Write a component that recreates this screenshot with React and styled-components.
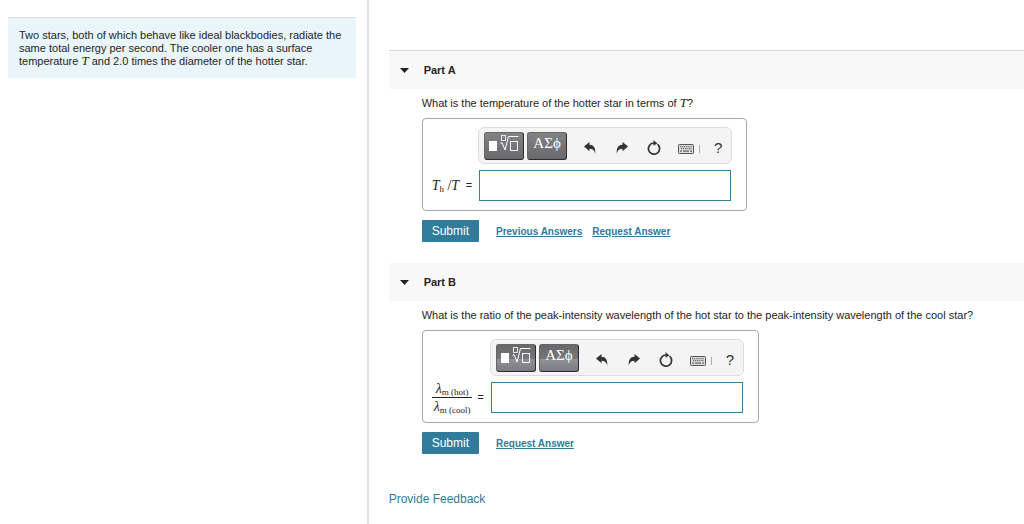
import React, { useState } from "react";
import styled, { createGlobalStyle } from "styled-components";

const GlobalStyle = createGlobalStyle`
  * {
    box-sizing: border-box;
  }
  body {
    margin: 0;
    background: #fff;
    color: #252525;
    font-family: "Liberation Sans", Arial, sans-serif;
    font-size: 11px;
    line-height: 13px;
  }
  p, h2 {
    margin: 0;
  }
`;
const Page = styled.div`
  display: flex;
  min-height: 100vh;
`;
const Sidebar = styled.aside`
  flex: 0 0 36%;
  padding: 17px 11px 0 8px;
  border-right: 2px solid #d8e0e8;
`;
const Intro = styled.p`
  padding: 11px 11px 10px;
  background: #e9f5f8;
  border-top: 1px solid #dadfdf;
`;
const Main = styled.main`
  flex: 1;
  min-width: 0;
  padding: 50px 0 0 20px;
`;
const Part = styled.section`
  margin-bottom: 21px;
`;
const PartHeader = styled.h2`
  background: #f8f8f8;
  border-top: ${(props) => (props.$first ? "1px solid #d5d5d5" : "0")};
  font-size: 11px;
`;
const Toggle = styled.button`
  display: flex;
  align-items: center;
  gap: 15px;
  width: 100%;
  padding: 13px 11px 12px;
  border: 0;
  background: none;
  color: inherit;
  font: inherit;
  line-height: 13px;
  text-align: left;
  cursor: pointer;
`;
const Caret = styled.svg`
  width: 9px;
  height: 5px;
  fill: #222;
  transform: ${(props) => (props.$open ? "none" : "rotate(-90deg)")};
`;
const PartBody = styled.form`
  padding: 8px 10px 0 33px;
`;
const AnswerBox = styled.div`
  display: flex;
  align-items: flex-end;
  gap: 6px;
  width: fit-content;
  margin: 8px 0 9px;
  padding: 8px 14px 9px 9px;
  border: 1px solid #a8a8a8;
  border-radius: 4px;
`;
const AnswerLabel = styled.label`
  display: flex;
  align-items: center;
  gap: 5px;
  height: 31px;
`;
const Formula = styled.span`
  min-width: 29px;
  font-family: "Liberation Serif", "Times New Roman", serif;
  font-size: 14px;
  white-space: nowrap;
`;
const Variable = styled.i`
  font-family: "Liberation Serif", "Times New Roman", serif;
  font-size: 13px;
  line-height: 0;
`;
const Sub = styled.sub`
  font-size: 9px;
  line-height: 0;
  vertical-align: -2px;
`;
const Fraction = styled.span`
  display: flex;
  flex-direction: column;
  text-align: center;
`;
const Term = styled.span`
  padding: 0 2px;
  line-height: 17px;
  & + & {
    border-top: 1px solid #252525;
  }
`;
const Fields = styled.div`
  width: 254px;
`;
const Toolbar = styled.div`
  display: flex;
  align-items: center;
  height: 37px;
  margin-bottom: 6px;
  padding-left: 5px;
  background: #f4f4f4;
  border: 1px solid #dedede;
  border-radius: 6px;
`;
const Tools = styled.div`
  display: flex;
  flex: 1;
  margin-left: 4px;
`;
const PaletteButton = styled.button`
  display: flex;
  flex: none;
  justify-content: center;
  width: 40px;
  height: 28px;
  margin-right: 3px;
  padding: 0;
  border: 1px solid #2c2c2e;
  border-top-color: #666;
  border-left-color: #666;
  border-radius: 3px;
  background: ${(props) =>
    props.$split
      ? "linear-gradient(#68686a, #77777a 52%, #919198 53%, #7b7b82)"
      : "linear-gradient(#838386, #69696d)"};
  color: #fff;
  font-family: "Liberation Serif", "Times New Roman", serif;
  font-size: 15px;
  line-height: 20px;
`;
const ToolButton = styled.button`
  display: flex;
  flex: 0 0 32px;
  justify-content: center;
  padding: 4px 0 0;
  border: 0;
  background: none;
  color: #333;
  font-family: "Liberation Sans", Arial, sans-serif;
  font-size: 15px;
  line-height: 16px;
`;
const ToolIcon = styled.svg`
  flex: none;
  width: 16px;
  height: 16px;
`;
const KeyboardIcon = styled.svg`
  flex: none;
  width: 32px;
  height: 16px;
`;
const PaletteIcon = styled.svg`
  flex: none;
  width: 32px;
  height: 22px;
`;
const AnswerInput = styled.input`
  display: block;
  width: calc(100% - 2px);
  height: 31px;
  margin: 0 1px;
  padding: 4px 6px;
  border: 1px solid #357f9f;
  border-radius: 0;
  background: #fff;
  font-size: 13px;
`;
const Actions = styled.div`
  display: flex;
  align-items: center;
  gap: 10px;
`;
const Submit = styled.button`
  height: 22px;
  margin-right: 7px;
  padding: 0 10px;
  border: 0;
  border-radius: 1px;
  background: #317b9b;
  color: #fff;
  font-family: inherit;
  font-size: 12px;
`;
const ActionLink = styled.a`
  color: #317b9b;
  font-size: 10px;
  font-weight: bold;
`;
const Feedback = styled.a`
  display: inline-block;
  margin-top: 18px;
  color: #317b9b;
  font-size: 12px;
  text-decoration: none;
`;

const TemplateIcon = () => (
  <PaletteIcon viewBox="0 0 32 22" fill="none" stroke="#fff" aria-hidden="true">
    <rect x="1" y="8" width="8" height="10" fill="#fff" stroke="none" />
    <rect x="13.5" y="2.5" width="4" height="5" strokeWidth="0.8" />
    <path d="M12.5 10.5l1.5-1 3 7.5 3.5-13.5H30.5" strokeWidth="1" />
    <rect x="22.5" y="8.5" width="7" height="9" strokeWidth="0.9" />
  </PaletteIcon>
);

const ArrowIcon = ({ flip }) => (
  <ToolIcon viewBox="0 0 16 16" aria-hidden="true">
    <path
      d="M2 6.5L7.5 2V4.7C11.5 4.8 13.8 7.5 13.2 13.5C12.2 10.2 10.5 8.8 7.5 8.8V11.2Z"
      fill="#333"
      transform={flip ? "translate(16 0) scale(-1 1)" : undefined}
    />
  </ToolIcon>
);

const ResetIcon = () => (
  <ToolIcon viewBox="0 0 16 16" aria-hidden="true">
    <path
      d="M11.5 4.2A5.6 5.6 0 1 1 7.8 3"
      fill="none"
      stroke="#333"
      strokeWidth="1.7"
    />
    <path d="M7.5 0.3L11.4 3.2L7.5 5.8Z" fill="#333" />
  </ToolIcon>
);

const KeysIcon = () => (
  <KeyboardIcon viewBox="0 0 32 16" fill="none" aria-hidden="true">
    <rect x="8.5" y="4.5" width="15" height="9" rx="0.8" fill="#ddd" stroke="#555" />
    <path d="M10 6.7h12M11 8.7h11" stroke="#666" strokeWidth="1.2" strokeDasharray="1.2 0.9" />
    <path d="M10 11.2h2M13 11.2h6M20 11.2h2" stroke="#666" strokeWidth="1.3" />
    <path d="M29.5 5v8" stroke="#aaa" />
  </KeyboardIcon>
);

const Question = ({ id, title, question, label, links, first, split }) => {
  const [open, setOpen] = useState(true);
  return (
    <Part>
      <PartHeader $first={first}>
        <Toggle aria-expanded={open} onClick={() => setOpen(!open)}>
          <Caret viewBox="0 0 9 5" $open={open} aria-hidden="true">
            <path d="M0 0H9L4.5 5Z" />
          </Caret>
          {title}
        </Toggle>
      </PartHeader>
      {open && (
        <PartBody onSubmit={(e) => e.preventDefault()}>
          <p>{question}</p>
          <AnswerBox>
            <AnswerLabel htmlFor={id}>
              {label}
              <span>=</span>
            </AnswerLabel>
            <Fields>
              <Toolbar>
                <PaletteButton type="button" aria-label="Templates" $split={split}>
                  <TemplateIcon />
                </PaletteButton>
                <PaletteButton type="button" $split={split}>
                  ΑΣϕ
                </PaletteButton>
                <Tools>
                  <ToolButton type="button" aria-label="Undo">
                    <ArrowIcon />
                  </ToolButton>
                  <ToolButton type="button" aria-label="Redo">
                    <ArrowIcon flip />
                  </ToolButton>
                  <ToolButton type="button" aria-label="Reset">
                    <ResetIcon />
                  </ToolButton>
                  <ToolButton type="button" aria-label="Keyboard shortcuts">
                    <KeysIcon />
                  </ToolButton>
                  <ToolButton type="button" aria-label="Help">
                    ?
                  </ToolButton>
                </Tools>
              </Toolbar>
              <AnswerInput id={id} type="text" />
            </Fields>
          </AnswerBox>
          <Actions>
            <Submit type="submit">Submit</Submit>
            {links.map((text) => (
              <ActionLink href="#" key={text}>
                {text}
              </ActionLink>
            ))}
          </Actions>
        </PartBody>
      )}
    </Part>
  );
};

const App = () => (
  <>
    <GlobalStyle />
    <Page>
      <Sidebar>
        <Intro>
          Two stars, both of which behave like ideal blackbodies, radiate the
          same total energy per second. The cooler one has a surface temperature{" "}
          <Variable>T</Variable> and 2.0 times the diameter of the hotter star.
        </Intro>
      </Sidebar>
      <Main>
        <Question
          first
          id="part-a"
          title="Part A"
          question={
            <>
              What is the temperature of the hotter star in terms of{" "}
              <Variable>T</Variable>?
            </>
          }
          label={
            <Formula>
              <i>T</i>
              <Sub>h</Sub> /<i>T</i>
            </Formula>
          }
          links={["Previous Answers", "Request Answer"]}
        />
        <Question
          split
          id="part-b"
          title="Part B"
          question="What is the ratio of the peak-intensity wavelength of the hot star to the peak-intensity wavelength of the cool star?"
          label={
            <Formula as={Fraction}>
              <Term>
                <i>λ</i>
                <Sub>m (hot)</Sub>
              </Term>
              <Term>
                <i>λ</i>
                <Sub>m (cool)</Sub>
              </Term>
            </Formula>
          }
          links={["Request Answer"]}
        />
        <Feedback href="#">Provide Feedback</Feedback>
      </Main>
    </Page>
  </>
);
export default App;
